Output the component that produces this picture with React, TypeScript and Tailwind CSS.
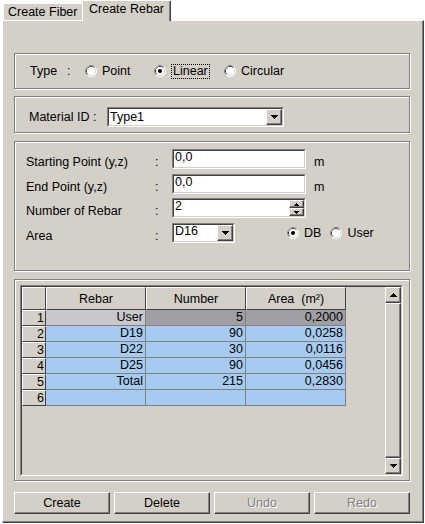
import React from "react";

const Radio = ({ checked }: { checked?: boolean }) => (
  <svg width="12" height="12" viewBox="0 0 12 12" className="shrink-0">
    <circle cx="6" cy="6" r="5.5" fill="#fff" stroke="#fff" strokeWidth="1" />
    <path d="M 2.11 9.89 A 5.5 5.5 0 0 1 9.89 2.11" fill="none" stroke="#808080" strokeWidth="1" />
    <path d="M 9.18 2.82 A 4.5 4.5 0 0 1 2.82 9.18" fill="none" stroke="#d4d0c8" strokeWidth="1" />
    <path d="M 2.82 9.18 A 4.5 4.5 0 0 1 9.18 2.82" fill="none" stroke="#404040" strokeWidth="1" />
    <circle cx="6" cy="6" r="4" fill="#fff" />
    {checked && <circle cx="6" cy="6" r="2" fill="#000" />}
  </svg>
);

const ArrowDown = () => (
  <svg width="7" height="4" viewBox="0 0 7 4" shapeRendering="crispEdges">
    <path d="M0 0h7v1H0z M1 1h5v1H1z M2 2h3v1H2z M3 3h1v1H3z" fill="#000" />
  </svg>
);
const ArrowUp = () => (
  <svg width="7" height="4" viewBox="0 0 7 4" shapeRendering="crispEdges">
    <path d="M3 0h1v1H3z M2 1h3v1H2z M1 2h5v1H1z M0 3h7v1H0z" fill="#000" />
  </svg>
);
const SmallUp = () => (
  <svg width="5" height="3" viewBox="0 0 5 3" shapeRendering="crispEdges">
    <path d="M2 0h1v1H2z M1 1h3v1H1z M0 2h5v1H0z" fill="#000" />
  </svg>
);
const SmallDown = () => (
  <svg width="5" height="3" viewBox="0 0 5 3" shapeRendering="crispEdges">
    <path d="M0 0h5v1H0z M1 1h3v1H1z M2 2h1v1H2z" fill="#000" />
  </svg>
);

const raised =
  "border border-t-white border-l-white border-r-[#404040] border-b-[#404040] shadow-[inset_-1px_-1px_0_#808080] bg-[#d4d0c8]";

const Sunken = ({ className, children }: { className: string; children?: React.ReactNode }) => (
  <div className={`border border-t-[#808080] border-l-[#808080] border-r-white border-b-white ${className}`}>
    <div className="w-full h-full border border-t-[#404040] border-l-[#404040] border-r-[#d4d0c8] border-b-[#d4d0c8] bg-white flex">
      {children}
    </div>
  </div>
);

const Combo = ({ w, text, centered }: { w: string; text: string; centered?: boolean }) => (
  <Sunken className={`${w} h-[20px] shrink-0`}>
    <div className={`flex-1 pl-[1px] ${centered ? "leading-[16px]" : "leading-[13px]"}`}>{text}</div>
    <div className={`${raised} w-[16px] h-[16px] flex items-center justify-center`}>
      <ArrowDown />
    </div>
  </Sunken>
);

const Group = ({ className, children }: { className: string; children?: React.ReactNode }) => (
  <div className={`w-[396px] shrink-0 border border-[#808080] shadow-[inset_1px_1px_0_#fff,1px_1px_0_#fff] ${className}`}>
    {children}
  </div>
);

const rows: [string, string, string, string][] = [
  ["1", "User", "5", "0,2000"],
  ["2", "D19", "90", "0,0258"],
  ["3", "D22", "30", "0,0116"],
  ["4", "D25", "90", "0,0456"],
  ["5", "Total", "215", "0,2830"],
  ["6", "", "", ""],
];

const InputRow = ({ label, children }: { label: string; children: React.ReactNode }) => (
  <div className="flex items-start h-[20px]">
    <div className="w-[129px] pt-[6px] shrink-0">{label}</div>
    <div className="w-[17px] pt-[6px] shrink-0">:</div>
    {children}
  </div>
);

const Btn = ({ label, disabled }: { label: string; disabled?: boolean }) => (
  <div className={`${raised} w-[96px] h-[22px] flex items-center justify-center`}>
    <span className={disabled ? "text-[#808080] [text-shadow:1px_1px_0_#fff]" : ""}>{label}</span>
  </div>
);

export default function App() {
  return (
    <div className="w-[425px] h-[524px] bg-white font-['Liberation_Sans',Arial,sans-serif] text-[12.5px] leading-[14px] text-black select-none">
      <div className="flex items-end h-[20px] pl-[3px]">
        <div className="w-[79px] h-[17px] bg-[#d4d0c8] border-l border-t border-white flex items-center pl-[4px]">
          Create Fiber
        </div>
        <div className="relative z-10 -mb-px w-[89px] h-[21px] bg-[#d4d0c8] border-l border-t border-r border-l-white border-t-white border-r-[#404040] shadow-[inset_-1px_0_0_#808080] pl-[6px] pt-[1px] rounded-tr-[2px]">
          Create Rebar
        </div>
      </div>
      <div className="ml-[2px] w-[422px] h-[503px] bg-[#d4d0c8] border border-l-white border-t-white border-r-[#404040] border-b-[#404040] shadow-[inset_-1px_-1px_0_#808080] pl-[11px] pt-[32px] flex flex-col">
        <Group className="h-[36px] flex items-center pl-[15px]">
          <span className="w-[37px] shrink-0">Type</span>
          <span className="w-[18px] shrink-0">:</span>
          <div className="w-[69px] flex items-center gap-[5px] shrink-0">
            <Radio />
            <span>Point</span>
          </div>
          <div className="w-[70px] flex items-center gap-[5px] shrink-0">
            <Radio checked />
            <span className="border border-dotted border-black px-[1px] leading-[13px]">Linear</span>
          </div>
          <div className="flex items-center gap-[5px]">
            <Radio />
            <span>Circular</span>
          </div>
        </Group>

        <Group className="mt-[7px] h-[37px] flex items-start pt-[10px] pl-[14px]">
          <div className="flex items-center h-[20px]">
            <span className="w-[78px] shrink-0">Material ID :</span>
            <Combo w="w-[177px]" text="Type1" centered />
          </div>
        </Group>

        <Group className="mt-[8px] h-[130px] pt-[7px] pl-[11px] flex flex-col">
          <InputRow label="Starting Point (y,z)">
            <Sunken className="w-[134px] h-[20px] shrink-0">
              <div className="pl-[1px] leading-[12px]">0,0</div>
            </Sunken>
            <span className="ml-[8px] pt-[6px]">m</span>
          </InputRow>
          <div className="mt-[5px]">
            <InputRow label="End Point (y,z)">
              <Sunken className="w-[134px] h-[20px] shrink-0">
                <div className="pl-[1px] leading-[12px]">0,0</div>
              </Sunken>
              <span className="ml-[8px] pt-[6px]">m</span>
            </InputRow>
          </div>
          <div className="mt-[4px]">
            <InputRow label="Number of Rebar">
              <Sunken className="w-[134px] h-[20px] shrink-0">
                <div className="flex-1 pl-[1px] leading-[12px]">2</div>
                <div className="w-[15px] flex flex-col">
                  <div className={`${raised} h-[8px] flex items-center justify-center`}>
                    <SmallUp />
                  </div>
                  <div className={`${raised} h-[8px] flex items-center justify-center`}>
                    <SmallDown />
                  </div>
                </div>
              </Sunken>
            </InputRow>
          </div>
          <div className="mt-[5px]">
            <InputRow label="Area">
              <Combo w="w-[63px]" text="D16" />
              <div className="ml-[52px] h-[20px] flex items-center">
                <Radio checked />
                <span className="ml-[5px]">DB</span>
                <span className="ml-[9px]">
                  <Radio />
                </span>
                <span className="ml-[5px]">User</span>
              </div>
            </InputRow>
          </div>
        </Group>

        <Group className="mt-[8px] h-[202px] pt-[5px] pl-[5px]">
          <div className="w-[383px] h-[191px] border border-t-[#808080] border-l-[#808080] border-r-white border-b-white">
            <div className="w-full h-full border border-t-[#404040] border-l-[#404040] border-r-[#d4d0c8] border-b-[#d4d0c8] flex bg-[#d4d0c8]">
              <div className="flex-1 flex flex-col">
                <div className="flex h-[23px]">
                  <div className="w-[24px] border border-t-white border-l-white border-r-[#404040] border-b-[#404040]" />
                  {["Rebar", "Number", "Area  (m²)"].map((h) => (
                    <div
                      key={h}
                      className="w-[100px] border border-t-white border-l-white border-r-[#404040] border-b-[#404040] flex items-center justify-center whitespace-pre"
                    >
                      {h}
                    </div>
                  ))}
                </div>
                {rows.map((r, i) => (
                  <div key={r[0]} className="flex h-[16px]">
                    <div className="w-[24px] border border-t-white border-l-white border-r-[#404040] border-b-[#404040] text-right pr-[1px] leading-[14px]">
                      {r[0]}
                    </div>
                    <div
                      className={`w-[100px] border-r border-b border-[#808080] text-right pr-[2px] leading-[15px] ${
                        i === 0 ? "bg-[#c8c8cc]" : "bg-[#a6caf0]"
                      }`}
                    >
                      {r[1]}
                    </div>
                    <div
                      className={`w-[100px] border-r border-b border-[#808080] text-right pr-[2px] leading-[15px] ${
                        i === 0 ? "bg-[#a0a0a4]" : "bg-[#a6caf0]"
                      }`}
                    >
                      {r[2]}
                    </div>
                    <div
                      className={`w-[100px] border-r border-b border-[#808080] text-right pr-[2px] leading-[15px] ${
                        i === 0 ? "bg-[#a0a0a4]" : "bg-[#a6caf0]"
                      }`}
                    >
                      {r[3]}
                    </div>
                  </div>
                ))}
              </div>
              <div className="w-[16px] flex flex-col">
                <div className={`${raised} h-[16px] flex items-center justify-center`}>
                  <ArrowUp />
                </div>
                <div className={`${raised} flex-1`} />
                <div className={`${raised} h-[16px] flex items-center justify-center`}>
                  <ArrowDown />
                </div>
              </div>
            </div>
          </div>
        </Group>

        <div className="mt-[11px] flex gap-[4px]">
          <Btn label="Create" />
          <Btn label="Delete" />
          <Btn label="Undo" disabled />
          <Btn label="Redo" disabled />
        </div>
      </div>
    </div>
  );
}
